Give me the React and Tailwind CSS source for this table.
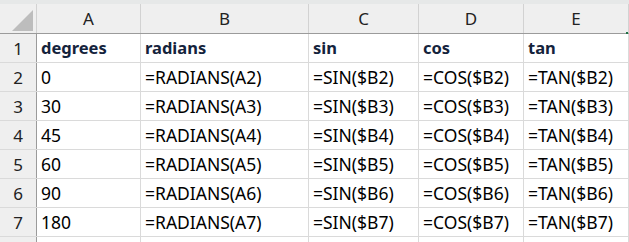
const cols = [
  { key: "A", w: "w-[104px]" },
  { key: "B", w: "w-[168px]" },
  { key: "C", w: "w-[110px]" },
  { key: "D", w: "w-[105px]" },
  { key: "E", w: "flex-1" },
];

const rows = [
  ["degrees", "radians", "sin", "cos", "tan"],
  ["0", "=RADIANS(A2)", "=SIN($B2)", "=COS($B2)", "=TAN($B2)"],
  ["30", "=RADIANS(A3)", "=SIN($B3)", "=COS($B3)", "=TAN($B3)"],
  ["45", "=RADIANS(A4)", "=SIN($B4)", "=COS($B4)", "=TAN($B4)"],
  ["60", "=RADIANS(A5)", "=SIN($B5)", "=COS($B5)", "=TAN($B5)"],
  ["90", "=RADIANS(A6)", "=SIN($B6)", "=COS($B6)", "=TAN($B6)"],
  ["180", "=RADIANS(A7)", "=SIN($B7)", "=COS($B7)", "=TAN($B7)"],
];

export default function App() {
  return (
    <div className="w-[629px] h-[242px] overflow-hidden bg-white font-['Noto_Sans','Open_Sans',sans-serif] text-[17.5px] text-black">
      <div className="h-[4px] bg-[#e6e8e8]" />

      {/* column headers */}
      <div className="flex h-[30px] border-b border-[#9b9b9b] bg-[#efefef] text-[17px]">
        <div className="flex w-[37px] shrink-0 items-end border-r border-[#d2d2d2] pb-[2px] pl-[12px]">
          <svg width="21" height="21" viewBox="0 0 21 21">
            <polygon points="21,0 21,21 0,21" fill="#bdbdbd" />
          </svg>
        </div>
        {cols.map((c) => (
          <div
            key={c.key}
            className={`relative flex shrink-0 items-center justify-center border-r border-[#d2d2d2] pt-[1px] text-[#222] ${c.w}`}
          >
            {c.key}
            {c.key === "E" && (
              <span className="absolute right-0 bottom-[-1px] h-[2px] w-[2px] bg-[#1e7145]" />
            )}
          </div>
        ))}
      </div>

      {rows.map((r, i) => (
        <div key={i} className="flex h-[29px] border-b border-[#dadada]">
          <div className="flex w-[37px] shrink-0 items-center justify-center border-r border-[#9b9b9b] bg-[#efefef] pt-[1px] text-[17px] text-[#222]">
            {i + 1}
          </div>
          {r.map((v, j) => (
            <div
              key={j}
              className={`flex shrink-0 items-center border-r border-[#dadada] pt-[1px] ${j === 0 ? "pl-[4px]" : "pl-[4px]"} ${cols[j].w} ${i === 0 ? "text-[16.5px] font-bold text-[#14233c]" : ""}`}
            >
              {v}
            </div>
          ))}
        </div>
      ))}

      <div className="flex h-[20px]">
        <div className="w-[37px] shrink-0 border-r border-[#9b9b9b] bg-[#efefef]" />
        {cols.map((c) => (
          <div key={c.key} className={`shrink-0 border-r border-[#dadada] ${c.w}`} />
        ))}
      </div>
    </div>
  );
}
